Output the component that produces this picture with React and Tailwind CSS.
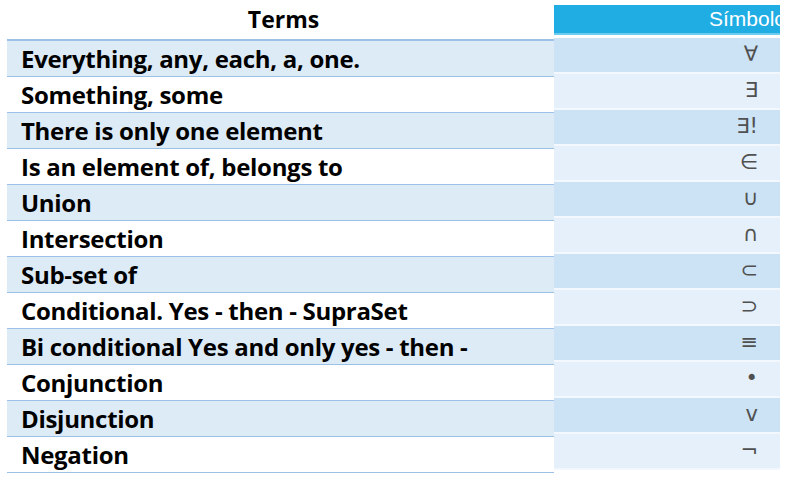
import React from 'react';

const rows = [
  { term: 'Everything, any, each, a, one.', symbol: '∀' },
  { term: 'Something, some', symbol: '∃' },
  { term: 'There is only one element', symbol: '∃!' },
  { term: 'Is an element of, belongs to', symbol: '∈' },
  { term: 'Union', symbol: '∪' },
  { term: 'Intersection', symbol: '∩' },
  { term: 'Sub-set of', symbol: '⊂' },
  { term: 'Conditional. Yes - then - SupraSet', symbol: '⊃' },
  { term: 'Bi conditional Yes and only yes - then -', symbol: '≡' },
  { term: 'Conjunction', symbol: '•' },
  { term: 'Disjunction', symbol: 'v' },
  { term: 'Negation', symbol: '¬' },
];

export default function App() {
  return (
    <div className="w-[787px] h-[484px] bg-white flex overflow-hidden">
      {/* Terms column */}
      <div className="ml-[7px] w-[547px] flex flex-col font-['Open_Sans',sans-serif] font-bold text-black">
        <div className="h-[41px] border-b-2 border-[#9bc2e6] flex items-center justify-center pl-[6px] text-[23px]">
          Terms
        </div>
        {rows.map((r, i) => (
          <div
            key={r.term}
            className={`h-[36px] border-b border-[#9bc2e6] flex items-center pl-[14px] text-[24px] tracking-[-0.3px] ${
              i % 2 === 0 ? 'bg-[#ddebf7]' : 'bg-white'
            }`}
          >
            {r.term}
          </div>
        ))}
      </div>

      {/* Symbols column */}
      <div className="w-[226px] pt-[5px] flex flex-col">
        <div className="h-[30px] bg-[#1fade3] border-b-2 border-[#6dcbee] flex items-center justify-end overflow-hidden text-white text-[21px] font-['Liberation_Sans',sans-serif]">
          <span className="mr-[-6px]">Símbolo</span>
        </div>
        <div className="h-[3px] bg-white" />
        {rows.map((r, i) => (
          <div
            key={r.symbol}
            className={`h-[36px] border-b-2 border-[#f2f8fd] flex items-center justify-end pr-[22px] text-[21px] text-[#505050] font-['DejaVu_Sans',sans-serif] ${
              i % 2 === 0 ? 'bg-[#cce2f5]' : 'bg-[#e5f0fa]'
            }`}
          >
            {r.symbol}
          </div>
        ))}
      </div>
    </div>
  );
}
